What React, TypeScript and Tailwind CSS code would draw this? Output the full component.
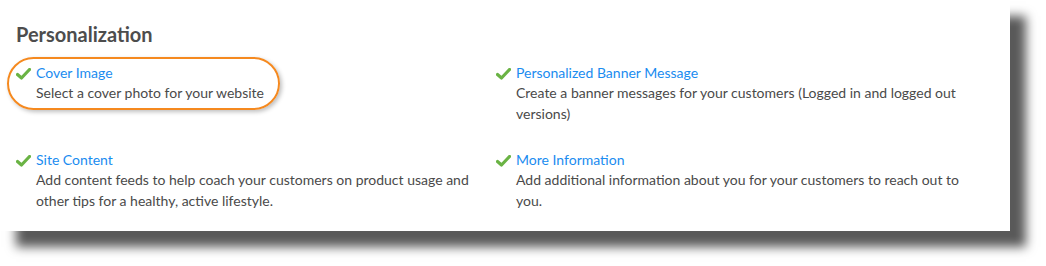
type Item = { title: string; desc: string };

const items: Item[] = [
  { title: "Cover Image", desc: "Select a cover photo for your website" },
  {
    title: "Personalized Banner Message",
    desc: "Create a banner messages for your customers (Logged in and logged out versions)",
  },
  {
    title: "Site Content",
    desc: "Add content feeds to help coach your customers on product usage and other tips for a healthy, active lifestyle.",
  },
  {
    title: "More Information",
    desc: "Add additional information about you for your customers to reach out to you.",
  },
];

function CheckMark() {
  return (
    <svg width="15" height="12" viewBox="0 0 15 12" className="shrink-0 mt-[4px]">
      <path d="M1.5 6.5 L5.5 10 L13.5 1.5" fill="none" stroke="#6ab344" strokeWidth="3.2" strokeLinecap="round" strokeLinejoin="round" />
    </svg>
  );
}

export default function App() {
  return (
    <div className="w-[1046px] h-[266px] bg-white" style={{ fontFamily: "Lato, 'Open Sans', sans-serif" }}>
      <div className="relative w-[1010px] h-[231px] bg-white shadow-[16px_16px_10px_rgba(0,0,0,0.65)] px-4 pt-[22px]">
        {/* Title */}
        <h1 className="text-[20px] leading-6 font-bold text-[#4d4d4d]">Personalization</h1>

        {/* Grid */}
        <div className="grid grid-cols-[480px_480px] gap-y-[27px] mt-[18px]">
          {items.map((it) => (
            <div key={it.title} className="flex gap-[5px]">
              <CheckMark />
              <div className="w-[452px] text-[14px] leading-[21px]">
                <div className="text-[#1a8cf0] leading-[18px]">{it.title}</div>
                <p className="text-[#4a4a4a]">{it.desc}</p>
              </div>
            </div>
          ))}
        </div>

        {/* Highlight ring */}
        <div className="absolute left-[7px] top-[57px] w-[273px] h-[53px] rounded-full border-2 border-[#f5891f] shadow-[2px_2px_4px_rgba(0,0,0,0.25)]" />
      </div>
    </div>
  );
}
